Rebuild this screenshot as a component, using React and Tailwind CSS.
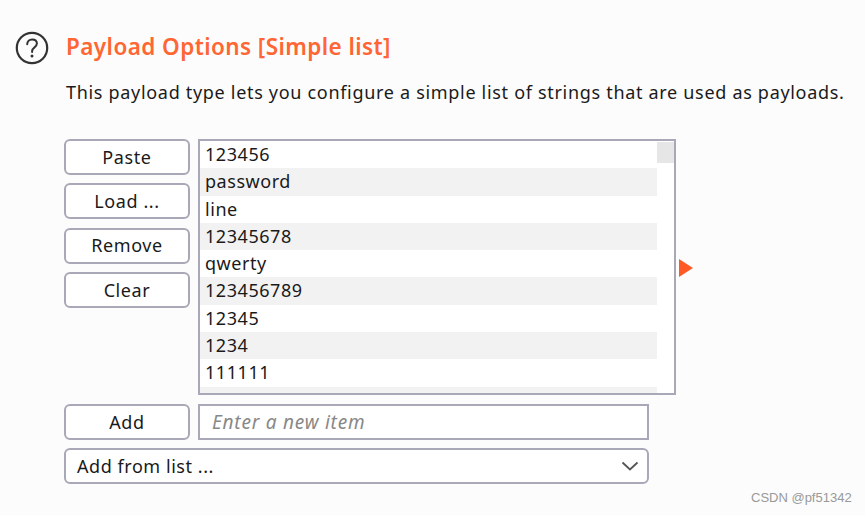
import React from "react";

const items = ["123456", "password", "line", "12345678", "qwerty", "123456789", "12345", "1234", "111111"];

function Btn({ children }) {
  return (
    <button className="h-[36px] w-[126px] rounded-[6px] border-2 border-[#a9a8b8] bg-white text-[18px] tracking-[0.6px] text-[#1a1a1a] flex items-center justify-center">
      {children}
    </button>
  );
}

export default function App() {
  return (
    <div className="relative h-[515px] w-[865px] overflow-hidden bg-[#fcfcfc] font-['Noto_Sans',sans-serif] text-[#1a1a1a]">
      <div className="flex items-center pl-[15px] pt-[31px]">
        <svg width="34" height="34" viewBox="0 0 34 34" fill="none" className="shrink-0">
          <circle cx="17" cy="17" r="15.2" stroke="#333" strokeWidth="2.2" />
          <path d="M12.2 13.2c0-3 2.2-4.8 4.9-4.8 2.8 0 4.8 1.7 4.8 4.2 0 2-1.2 3-2.6 4-1.4 1-2.2 1.8-2.2 3.6v.8" stroke="#333" strokeWidth="2" strokeLinecap="round" />
          <circle cx="17" cy="25" r="1.5" fill="#333" />
        </svg>
        <h1 className="ml-[17px] pb-[2px] text-[22.5px] font-semibold leading-[30px] text-[#ff6633] tracking-[0.42px] whitespace-nowrap">Payload Options [Simple list]</h1>
      </div>
      <p className="ml-[66px] mt-[14px] text-[18px] leading-[26px] tracking-[0.69px] whitespace-nowrap">
        This payload type lets you configure a simple list of strings that are used as payloads.
      </p>
      <div className="ml-[64px] mt-[34px] flex items-start gap-[8px]">
        <div className="flex w-[126px] flex-col gap-[8.4px]">
          <Btn>Paste</Btn>
          <Btn>Load ...</Btn>
          <Btn>Remove</Btn>
          <Btn>Clear</Btn>
        </div>
        <div className="relative h-[256px] w-[478px] overflow-hidden border-2 border-[#a9a8b8] bg-white">
          <div className="w-[457px]">
            {items.map((t, i) => (
              <div key={t} className={`h-[27.3px] pl-[5px] text-[18px] leading-[27px] tracking-[0.55px] ${i % 2 ? "bg-[#f2f2f2]" : "bg-white"}`}>{t}</div>
            ))}
            <div className="h-[27.3px] bg-[#f2f2f2]" />
          </div>
          <div className="absolute right-0 top-[1px] h-[21px] w-[17px] bg-[#e6e6e6]" />
        </div>
        <div className="mt-[120px] ml-[-5px] h-0 w-0 border-y-[9px] border-l-[14px] border-y-transparent border-l-[#ff5a26]" />
      </div>
      <div className="ml-[64px] mt-[9px] flex gap-[8px]">
        <Btn>Add</Btn>
        <div className="flex h-[36px] w-[451px] items-center border-2 border-[#a9a8b8] bg-white pl-[12px] text-[19px] italic tracking-[0.78px] text-[#888888]">Enter a new item</div>
      </div>
      <div className="ml-[64px] mt-[8px] flex h-[36px] w-[585px] items-center justify-between rounded-[6px] border-2 border-[#a9a8b8] bg-white pl-[11px] pr-[8px] text-[18px] tracking-[0.55px]">
        <span>Add from list ...</span>
        <svg width="18" height="10" viewBox="0 0 18 10" fill="none">
          <path d="M1.5 1.5 9 8.5l7.5-7" stroke="#555" strokeWidth="1.8" />
        </svg>
      </div>
      <div className="absolute left-[751px] top-[490px] font-['Liberation_Sans',sans-serif] text-[13px] leading-[16px] text-[#999999]">CSDN @pf51342</div>
    </div>
  );
}
